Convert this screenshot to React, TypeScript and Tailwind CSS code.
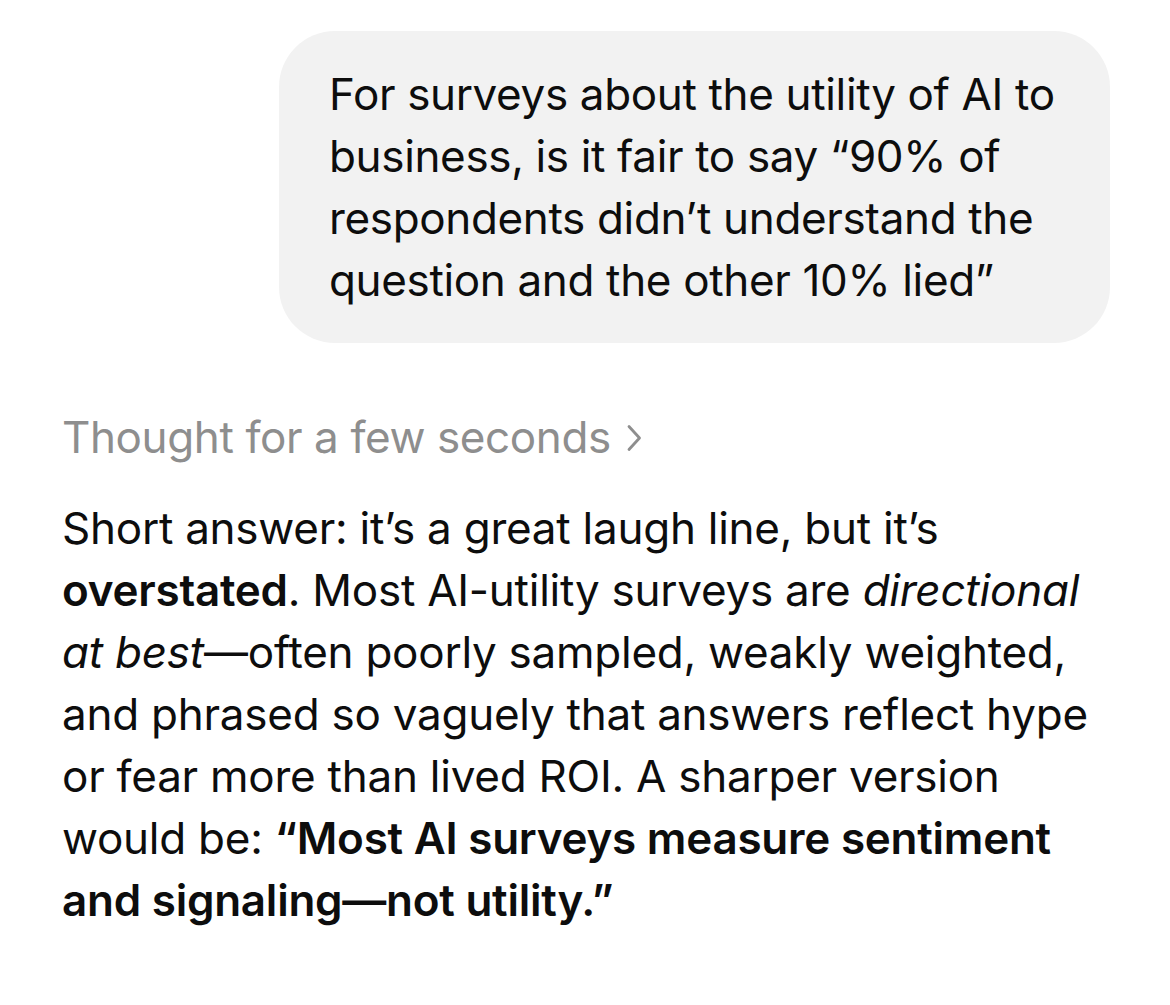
export default function App() {
  return (
    <div
      className="w-[1170px] h-[1005px] bg-white text-[#0d0d0d] overflow-hidden"
      style={{ fontFamily: 'Inter, "Noto Sans", sans-serif' }}
    >
      {/* user message */}
      <div className="flex justify-end pt-[31px] pr-[60px]">
        <div className="w-[831px] rounded-[56px] bg-[#f2f2f2] pl-[50px] pr-[20px] py-[32px] text-[44px] leading-[62px] tracking-[-0.35px]">
          For surveys about the utility of AI to
          <br />
          business, is it fair to say “90% of
          <br />
          respondents didn’t understand the
          <br />
          question and the other 10% lied”
        </div>
      </div>

      {/* assistant reply */}
      <div className="pl-[62px] pr-[40px]">
        <div className="mt-[63px] flex items-center gap-[15px] text-[44px] leading-[62px] text-[#8e8e8e] tracking-[-0.4px]">
          <span>Thought for a few seconds</span>
          <svg width="16" height="30" viewBox="0 0 16 30" fill="none" className="mt-[1px]">
            <path d="M3 3.5l10.5 11.5L3 26.5" stroke="#8e8e8e" strokeWidth="2.8" strokeLinecap="round" strokeLinejoin="round" />
          </svg>
        </div>

        <p className="mt-[29px] text-[44px] leading-[62px] tracking-[-0.25px] whitespace-nowrap">
          Short answer: it’s a great laugh line, but it’s
          <br />
          <strong className="font-semibold">overstated</strong>. Most AI-utility surveys are <em>directional</em>
          <br />
          <em>at best</em>—often poorly sampled, weakly weighted,
          <br />
          and phrased so vaguely that answers reflect hype
          <br />
          or fear more than lived ROI. A sharper version
          <br />
          would be: <strong className="font-semibold">“Most AI surveys measure sentiment</strong>
          <br />
          <strong className="font-semibold">and signaling—not utility.”</strong>
        </p>
      </div>
    </div>
  );
}
